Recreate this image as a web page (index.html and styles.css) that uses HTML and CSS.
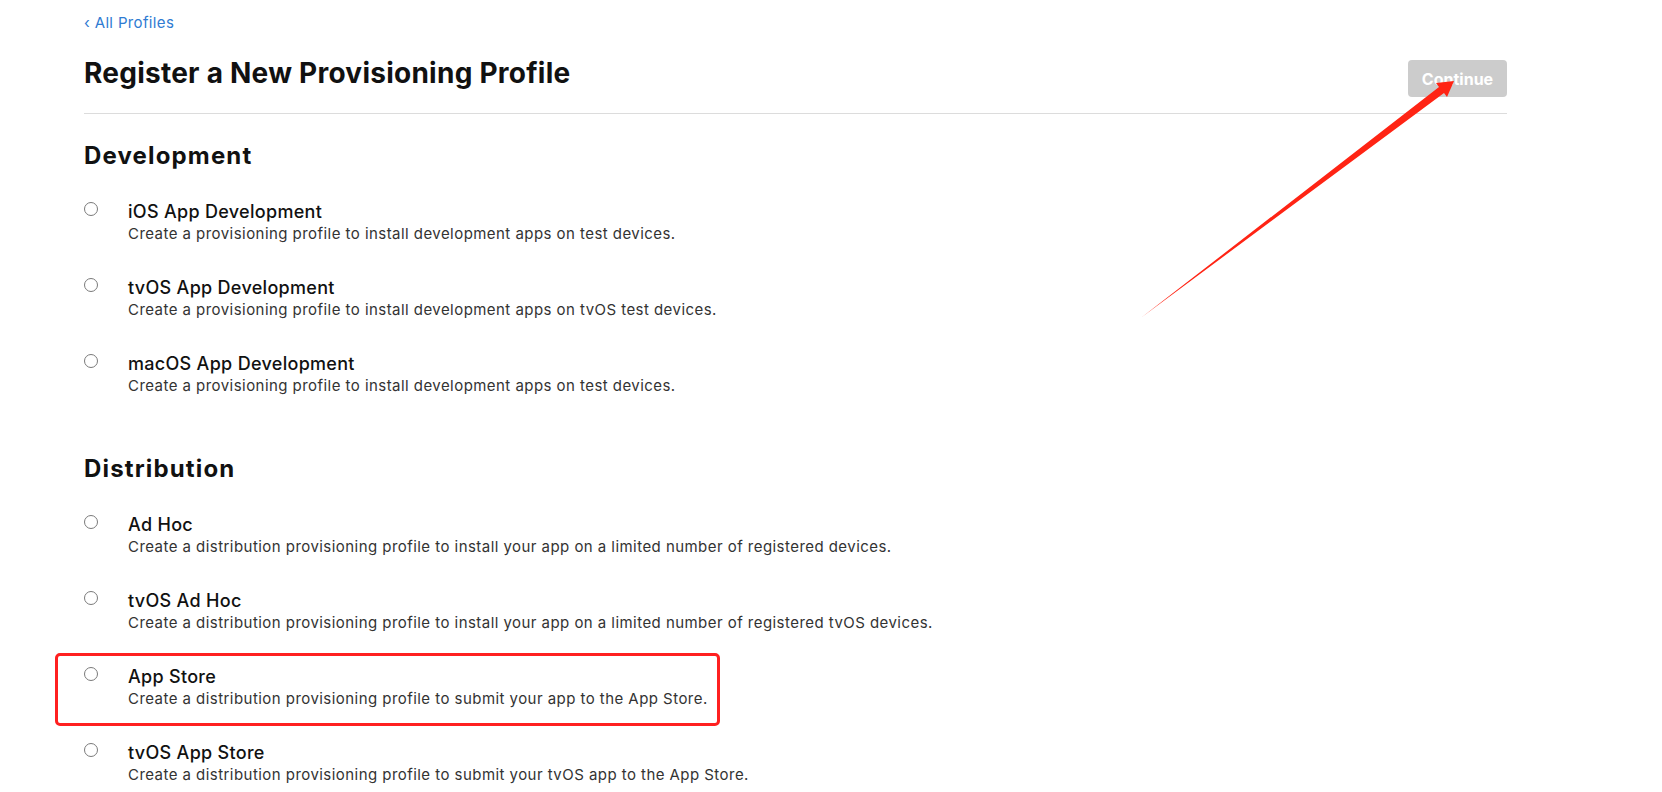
FILE: index.html
```html
<html>
  <head>
    <meta charset="UTF-8">
    <title>Register a New Provisioning Profile</title>
    <link rel="stylesheet" href="styles.css">
  </head>
  <body>
    <div class="page">
      <a class="back" href="#">&lsaquo; All Profiles</a>

      <div class="head">
        <h1 class="title">Register a New Provisioning Profile</h1>
        <button class="continue-btn" disabled>Continue</button>
      </div>

      <form class="profile_form">
        <section class="group">
          <h2 class="group-title">Development</h2>

          <label class="option">
            <span class="radio"></span>
            <span class="option-text">
              <span class="option-name">iOS App Development</span>
              <span class="option-desc">Create a provisioning profile to install development apps on test devices.</span>
            </span>
          </label>

          <label class="option">
            <span class="radio"></span>
            <span class="option-text">
              <span class="option-name">tvOS App Development</span>
              <span class="option-desc">Create a provisioning profile to install development apps on tvOS test devices.</span>
            </span>
          </label>

          <label class="option">
            <span class="radio"></span>
            <span class="option-text">
              <span class="option-name">macOS App Development</span>
              <span class="option-desc">Create a provisioning profile to install development apps on test devices.</span>
            </span>
          </label>
        </section>

        <section class="group">
          <h2 class="group-title">Distribution</h2>

          <label class="option">
            <span class="radio"></span>
            <span class="option-text">
              <span class="option-name">Ad Hoc</span>
              <span class="option-desc">Create a distribution provisioning profile to install your app on a limited number of registered devices.</span>
            </span>
          </label>

          <label class="option">
            <span class="radio"></span>
            <span class="option-text">
              <span class="option-name">tvOS Ad Hoc</span>
              <span class="option-desc">Create a distribution provisioning profile to install your app on a limited number of registered tvOS devices.</span>
            </span>
          </label>

          <label class="option marked">
            <span class="radio"></span>
            <span class="option-text">
              <span class="option-name">App Store</span>
              <span class="option-desc">Create a distribution provisioning profile to submit your app to the App Store.</span>
            </span>
          </label>

          <label class="option">
            <span class="radio"></span>
            <span class="option-text">
              <span class="option-name">tvOS App Store</span>
              <span class="option-desc">Create a distribution provisioning profile to submit your tvOS app to the App Store.</span>
            </span>
          </label>
        </section>
      </form>
    </div>

    <!-- annotation arrow pointing at the Continue button -->
    <svg class="arrow" width="1662" height="792" viewBox="0 0 1662 792">
      <polygon points="1142,317 1439,87 1436,83 1454,81 1447,97 1444,93" fill="#ff2414"/>
    </svg>
  </body>
</html>
```

FILE: styles.css
```css
body {
  margin: 0;
  position: relative;
  background: #fff;
  font-family: Inter, Roboto, 'Liberation Sans', sans-serif;
  color: #1d1d1f;
  overflow: hidden;
}

.page {
  padding: 14px 155px 0 84px;
}

.back {
  display: block;
  font-size: 15px;
  line-height: 18px;
  letter-spacing: 0.35px;
  color: #2f7bd2;
  text-decoration: none;
}

.head {
  display: flex;
  justify-content: space-between;
  align-items: flex-start;
  margin-top: 24px;
  padding-bottom: 16px;
  border-bottom: 1px solid #dcdcdc;
}

.title {
  margin: 0;
  font-size: 28px;
  line-height: 34px;
  font-weight: 700;
  letter-spacing: 0.25px;
  color: #111;
}

.continue-btn {
  box-sizing: border-box;
  width: 99px;
  height: 37px;
  margin-top: 4px;
  border: 0;
  border-radius: 4px;
  background: #cccccc;
  color: #fff;
  font-family: inherit;
  font-size: 16px;
  font-weight: 700;
}

.profile_form {
  margin: 0;
}

.group {
  display: flex;
  flex-direction: column;
  gap: 33px;
}

.group-title {
  margin: 27px 0 -3px;
  font-size: 24px;
  line-height: 30px;
  font-weight: 700;
  letter-spacing: 1.15px;
  color: #111;
}

.group + .group .group-title {
  margin-top: 58px;
}

.option {
  position: relative;
  display: flex;
  align-items: flex-start;
  gap: 30px;
  cursor: pointer;
}

.radio {
  box-sizing: border-box;
  flex: none;
  width: 14px;
  height: 14px;
  margin: 1px 0 0 0;
  border: 1px solid #7a7a7a;
  border-radius: 50%;
  background: #fff;
}

.option-text {
  display: flex;
  flex-direction: column;
  gap: 1px;
}

.option-name {
  font-size: 18px;
  line-height: 22px;
  font-weight: 500;
  letter-spacing: 0.3px;
  color: #111;
}

.option-desc {
  font-size: 15px;
  line-height: 20px;
  letter-spacing: 0.45px;
  color: #333;
}

/* red annotation box */
.marked::after {
  content: '';
  position: absolute;
  left: -29px;
  top: -13px;
  width: 665px;
  height: 73px;
  box-sizing: border-box;
  border: 3px solid #ff2020;
  border-radius: 5px;
}

.arrow {
  position: absolute;
  left: 0;
  top: 0;
  pointer-events: none;
}
```
